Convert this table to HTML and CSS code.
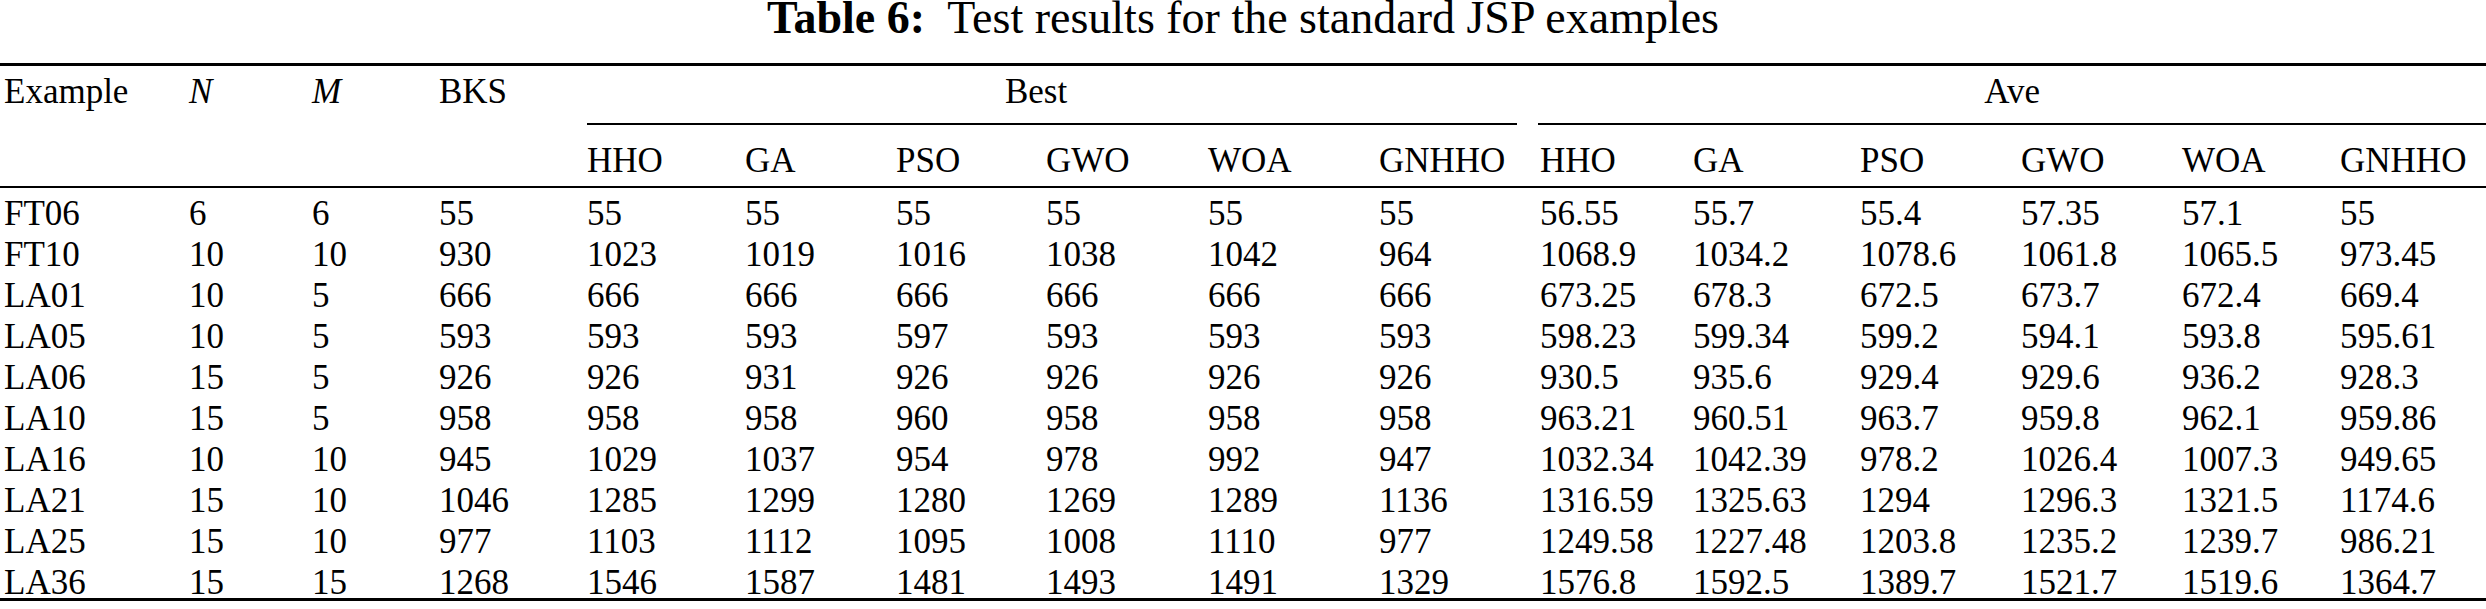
FILE: index.html
```html
<!DOCTYPE html>
<html lang="en">
<head>
    <meta charset="UTF-8">
    <title>Table 6: Test results for the standard JSP examples</title>
    <link rel="stylesheet" href="styles.css">
</head>
<body>
    <div class="page">
        <div class="caption"><b>Table 6:</b>&nbsp; Test results for the standard JSP examples</div>

        <table class="results">
            <colgroup>
                <col class="col-example"><col class="col-n"><col class="col-m"><col class="col-bks">
                <col class="col-b1"><col class="col-b2"><col class="col-b3"><col class="col-b4"><col class="col-b5"><col class="col-b6">
                <col class="col-a1"><col class="col-a2"><col class="col-a3"><col class="col-a4"><col class="col-a5"><col class="col-a6">
            </colgroup>
            <thead>
                <tr class="head-top">
                    <th rowspan="2" class="span-head">Example</th>
                    <th rowspan="2" class="span-head"><i>N</i></th>
                    <th rowspan="2" class="span-head"><i>M</i></th>
                    <th rowspan="2" class="span-head">BKS</th>
                    <th colspan="6" class="group best"><div class="group-label">Best</div></th>
                    <th colspan="6" class="group ave"><div class="group-label">Ave</div></th>
                </tr>
                <tr class="head-sub">
                    <th>HHO</th><th>GA</th><th>PSO</th><th>GWO</th><th>WOA</th><th>GNHHO</th>
                    <th>HHO</th><th>GA</th><th>PSO</th><th>GWO</th><th>WOA</th><th>GNHHO</th>
                </tr>
            </thead>
            <tbody>
                <tr><td>FT06</td><td>6</td><td>6</td><td>55</td><td>55</td><td>55</td><td>55</td><td>55</td><td>55</td><td>55</td><td>56.55</td><td>55.7</td><td>55.4</td><td>57.35</td><td>57.1</td><td>55</td></tr>
                <tr><td>FT10</td><td>10</td><td>10</td><td>930</td><td>1023</td><td>1019</td><td>1016</td><td>1038</td><td>1042</td><td>964</td><td>1068.9</td><td>1034.2</td><td>1078.6</td><td>1061.8</td><td>1065.5</td><td>973.45</td></tr>
                <tr><td>LA01</td><td>10</td><td>5</td><td>666</td><td>666</td><td>666</td><td>666</td><td>666</td><td>666</td><td>666</td><td>673.25</td><td>678.3</td><td>672.5</td><td>673.7</td><td>672.4</td><td>669.4</td></tr>
                <tr><td>LA05</td><td>10</td><td>5</td><td>593</td><td>593</td><td>593</td><td>597</td><td>593</td><td>593</td><td>593</td><td>598.23</td><td>599.34</td><td>599.2</td><td>594.1</td><td>593.8</td><td>595.61</td></tr>
                <tr><td>LA06</td><td>15</td><td>5</td><td>926</td><td>926</td><td>931</td><td>926</td><td>926</td><td>926</td><td>926</td><td>930.5</td><td>935.6</td><td>929.4</td><td>929.6</td><td>936.2</td><td>928.3</td></tr>
                <tr><td>LA10</td><td>15</td><td>5</td><td>958</td><td>958</td><td>958</td><td>960</td><td>958</td><td>958</td><td>958</td><td>963.21</td><td>960.51</td><td>963.7</td><td>959.8</td><td>962.1</td><td>959.86</td></tr>
                <tr><td>LA16</td><td>10</td><td>10</td><td>945</td><td>1029</td><td>1037</td><td>954</td><td>978</td><td>992</td><td>947</td><td>1032.34</td><td>1042.39</td><td>978.2</td><td>1026.4</td><td>1007.3</td><td>949.65</td></tr>
                <tr><td>LA21</td><td>15</td><td>10</td><td>1046</td><td>1285</td><td>1299</td><td>1280</td><td>1269</td><td>1289</td><td>1136</td><td>1316.59</td><td>1325.63</td><td>1294</td><td>1296.3</td><td>1321.5</td><td>1174.6</td></tr>
                <tr><td>LA25</td><td>15</td><td>10</td><td>977</td><td>1103</td><td>1112</td><td>1095</td><td>1008</td><td>1110</td><td>977</td><td>1249.58</td><td>1227.48</td><td>1203.8</td><td>1235.2</td><td>1239.7</td><td>986.21</td></tr>
                <tr class="last"><td>LA36</td><td>15</td><td>15</td><td>1268</td><td>1546</td><td>1587</td><td>1481</td><td>1493</td><td>1491</td><td>1329</td><td>1576.8</td><td>1592.5</td><td>1389.7</td><td>1521.7</td><td>1519.6</td><td>1364.7</td></tr>
            </tbody>
        </table>
    </div>
</body>
</html>
```

FILE: styles.css
```css
body {
    margin: 0;
    background: #fff;
    color: #000;
    font-family: "Liberation Serif", "Times New Roman", serif;
}
.page {
    width: 2486px;
}
.caption {
    font-size: 46px;
    line-height: 35px;
    text-align: center;
    margin-bottom: 28px;
}
.results {
    width: 2486px;
    table-layout: fixed;
    border-collapse: separate;
    border-spacing: 0;
    font-size: 35px;
}
.col-example { width: 185px; }
.col-n { width: 123px; }
.col-m { width: 127px; }
.col-bks { width: 148px; }
.col-b1 { width: 158px; }
.col-b2 { width: 151px; }
.col-b3 { width: 150px; }
.col-b4 { width: 162px; }
.col-b5 { width: 171px; }
.col-b6 { width: 161px; }
.col-a1 { width: 153px; }
.col-a2 { width: 167px; }
.col-a3 { width: 161px; }
.col-a4 { width: 161px; }
.col-a5 { width: 158px; }
.col-a6 { width: 150px; }
.results th,
.results td {
    font-weight: normal;
    text-align: left;
    white-space: nowrap;
    padding: 0 0 0 4px;
    line-height: 27px;
}
.results i {
    font-style: italic;
}
.span-head {
    vertical-align: top;
    border-top: 3px solid #000;
    border-bottom: 2px solid #000;
    padding-top: 12px !important;
}
.group {
    border-top: 3px solid #000;
    vertical-align: top;
}
.group-label {
    text-align: center;
    padding-top: 12px;
    padding-bottom: 18px;
    border-bottom: 2px solid #000;
}
.results .best {
    padding-right: 19px;
}
.best .group-label {
    padding-right: 32px;
}
.results .ave {
    padding-left: 2px;
}
.head-sub th {
    padding-top: 22px;
    padding-bottom: 12px;
    border-bottom: 2px solid #000;
}
.results td {
    height: 41px;
    box-sizing: border-box;
    padding-top: 12px;
    vertical-align: top;
}
.last td {
    border-bottom: 3px solid #000;
    height: 44px;
}
```
